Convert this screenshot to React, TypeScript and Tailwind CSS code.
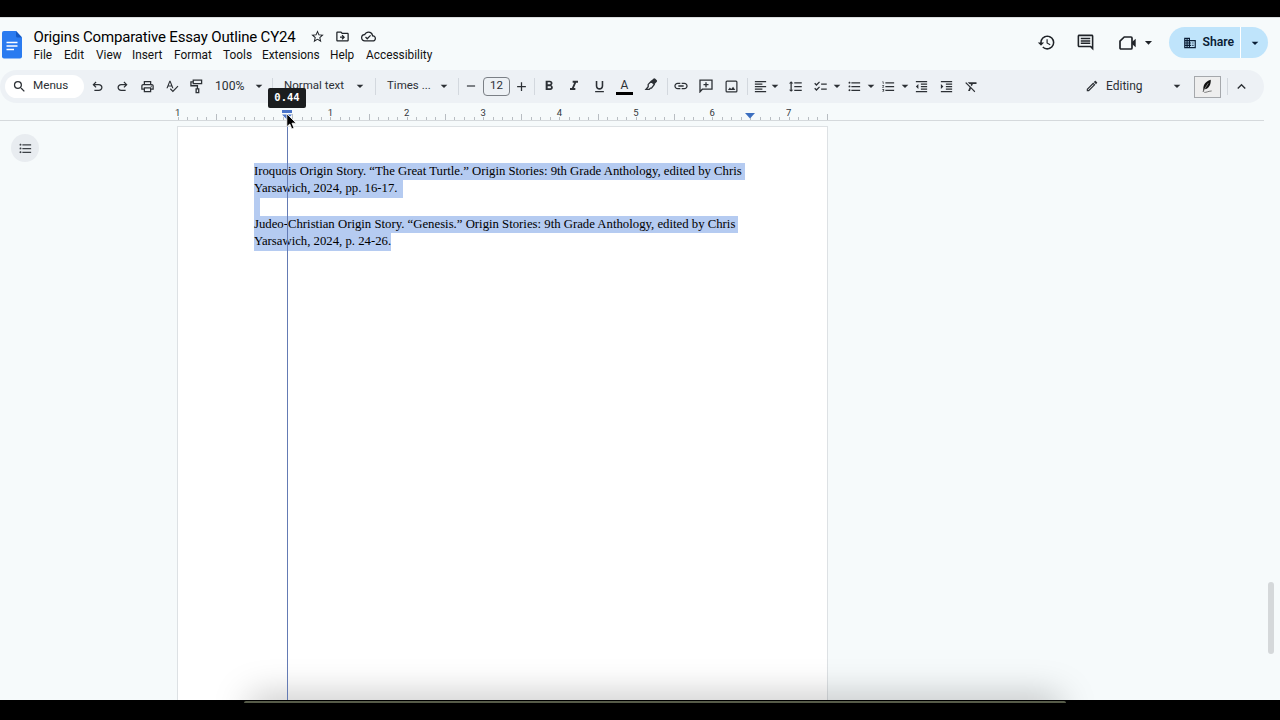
import type { ReactNode } from "react"
import {
  MdAdd,
  MdArrowDropDown,
  MdChecklist,
  MdDomain,
  MdFormatAlignLeft,
  MdFormatBold,
  MdFormatClear,
  MdFormatIndentDecrease,
  MdFormatIndentIncrease,
  MdFormatItalic,
  MdFormatLineSpacing,
  MdFormatListBulleted,
  MdFormatListNumbered,
  MdFormatUnderlined,
  MdHistory,
  MdKeyboardArrowUp,
  MdLink,
  MdOutlineCloudDone,
  MdOutlineComment,
  MdOutlineDriveFileMove,
  MdOutlineEdit,
  MdOutlinePrint,
  MdRemove,
  MdSearch,
  MdSpellcheck,
  MdStarOutline,
} from "react-icons/md"

const Slot = ({ w, children }: { w: string; children?: ReactNode }) => (
  <div className={`flex h-full shrink-0 items-center justify-center ${w}`}>{children}</div>
)

const Divider = () => <div className="-mr-px h-[17px] w-px shrink-0 bg-[#d3d8de]" />

const Caret = ({ w }: { w: string }) => (
  <Slot w={w}>
    <MdArrowDropDown size={16} className="shrink-0" />
  </Slot>
)

const UndoIcon = ({ flip }: { flip?: boolean }) => (
  <svg viewBox="0 -960 960 960" fill="currentColor" className={flip ? "size-[15px] -scale-x-100" : "size-[15px]"}>
    <path d="M280-200v-80h284q63 0 109.500-40T720-420q0-60-46.500-100T564-560H312l104 104-56 56-200-200 200-200 56 56-104 104h252q97 0 166.500 63T800-420q0 94-69.500 157T564-200H280Z" />
  </svg>
)

const DocsLogo = () => (
  <svg viewBox="0 0 20 28" className="h-[28px] w-[20px]">
    <path d="M2 0h12l6 6.500V25.500a2 2 0 0 1-2 2H2a2 2 0 0 1-2-2V2a2 2 0 0 1 2-2z" fill="#2a7bf0" />
    <path d="M14 0l6 6.500h-4.500A1.500 1.500 0 0 1 14 5z" fill="#1459c4" />
    <path d="M4.500 11.500h11M4.500 15h11M4.500 18.500h7.500" stroke="#fff" strokeWidth="1.500" />
  </svg>
)

const PaintIcon = () => (
  <svg viewBox="0 0 14 16" fill="none" stroke="currentColor" strokeWidth="1.400" className="h-[15px] w-[13px]">
    <path d="M3.500 1.200h9v3.600h-9zM3.500 3H1v4.200h7v3.300M6.600 10.500h2.800v4.200H6.600z" />
  </svg>
)

const MarkerIcon = () => (
  <svg viewBox="0 0 14 14" className="mb-[3px] h-[14px] w-[14px]">
    <path d="M7 2.900L9.300.8a1.400 1.400 0 0 1 2 0l1.300 1.300a1.400 1.400 0 0 1 0 2L10.500 6.300z" fill="currentColor" />
    <path d="M7.300 3.200L4.200 6.400v2.400L2 11.300h3.300l1.200-1.200h1l2.800-3.600z" fill="none" stroke="currentColor" strokeWidth="1.300" />
  </svg>
)

const AddCommentIcon = () => (
  <svg viewBox="0 0 14 14" fill="none" stroke="currentColor" strokeWidth="1.300" className="size-[14px]">
    <path d="M1 12.800V1.200h12v9H3.300zM7 3.200v5M4.500 5.700h5" />
  </svg>
)

const ImageIcon = () => (
  <svg viewBox="0 0 14 14" className="size-[13px]">
    <rect x="1.200" y="1.200" width="11.600" height="11.600" rx="1" fill="none" stroke="currentColor" strokeWidth="1.300" />
    <path d="M3.200 10.700l2-2.600 1.500 1.700 2-2.600 2.400 3.500z" fill="currentColor" />
  </svg>
)

const CameraIcon = () => (
  <svg viewBox="0 0 18 14" className="h-[14px] w-[18px]">
    <path d="M5.200 1H12a1 1 0 0 1 1 1v10a1 1 0 0 1-1 1H2a1 1 0 0 1-1-1V5.200z" fill="none" stroke="currentColor" strokeWidth="1.700" strokeLinejoin="round" />
    <path d="M13 6l3.700-3.300v8.600L13 8z" fill="currentColor" />
  </svg>
)

const QuillIcon = () => (
  <svg viewBox="0 0 14 16" className="h-[15px] w-[13px]">
    <path d="M10.500.8C6 2 2.200 5.600 2.500 11l-.7 2.600.7.200L4 11c4.600-.4 6.800-5.200 6.500-10.200z" fill="#111" />
    <path d="M2.200 13.500L7.800 4.500" stroke="#eee" strokeWidth=".5" />
    <path d="M3.500 14.300c2.500.3 3.500-1.200 8-1.500" stroke="#555" strokeWidth=".8" fill="none" />
  </svg>
)

const Cursor = () => (
  <svg viewBox="0 0 12 18" className="absolute top-[113px] left-[286px] h-[18px] w-[12px]">
    <path d="M.8.800v13l3-2.800 2 4.900 2.200-.9-2-4.800h4.200z" fill="#000" stroke="#fff" strokeWidth=".8" />
  </svg>
)

const menus = [
  { name: "File", w: "w-[30.500px]" },
  { name: "Edit", w: "w-[32px]" },
  { name: "View", w: "w-[36px]" },
  { name: "Insert", w: "w-[42px]" },
  { name: "Format", w: "w-[49px]" },
  { name: "Tools", w: "w-[39px]" },
  { name: "Extensions", w: "w-[68px]" },
  { name: "Help", w: "w-[36px]" },
  { name: "Accessibility", w: "w-[80px]" },
]

const Header = () => (
  <header className="flex h-[53px] shrink-0 justify-between text-[#1f2328]">
    <div className="flex">
      <div className="mt-[13px] ml-[2px] w-[31.500px]">
        <DocsLogo />
      </div>
      <div className="pt-[8px]">
        <div className="flex h-[21px] items-center">
          <h1 className="w-[276px] pt-[2px] font-[Roboto] text-[15px] tracking-[-0.170px] whitespace-nowrap text-black">Origins Comparative Essay Outline CY24</h1>
          <div className="flex items-center gap-[10.500px]">
            <MdStarOutline size={15} />
            <MdOutlineDriveFileMove size={15} />
            <MdOutlineCloudDone size={15} />
          </div>
        </div>
        <nav className="flex h-[18px] items-center font-[Roboto] text-[11.850px] text-[#111]">
          {menus.map((m) => (
            <span key={m.name} className={`whitespace-nowrap ${m.w}`}>
              {m.name}
            </span>
          ))}
        </nav>
      </div>
    </div>
    <div className="mt-[9px] mr-[12px] flex h-[31px] items-center">
      <Slot w="w-[38px]">
        <MdHistory size={19} />
      </Slot>
      <Slot w="w-[39px]">
        <MdOutlineComment size={19} />
      </Slot>
      <Slot w="w-[47px]">
        <CameraIcon />
      </Slot>
      <div className="-ml-[12px]">
        <MdArrowDropDown size={17} />
      </div>
      <div className="ml-[12.500px] flex h-full w-[99px] overflow-hidden rounded-full bg-[#bfe4fb] text-[#0a1d35]">
        <div className="flex w-[72px] shrink-0 items-center border-r border-white pl-[14px] font-[Roboto] text-[12.200px] font-semibold">
          <MdDomain size={14} className="shrink-0" />
          <span className="ml-[5.500px]">Share</span>
        </div>
        <div className="flex flex-1 items-center justify-center">
          <MdArrowDropDown size={16} />
        </div>
      </div>
    </div>
  </header>
)

const Toolbar = () => (
  <div className="flex h-[33px] w-[1264px] shrink-0 items-center rounded-full bg-[#edf1f5] pb-px pl-[5px] font-[Roboto] text-[12px] text-[#2c3035]">
    <div className="flex h-[23px] w-[79px] shrink-0 items-center rounded-full bg-white pl-[7px]">
      <MdSearch size={15} />
      <span className="ml-[6px] text-[11.700px]">Menus</span>
    </div>
    <Slot w="w-[26px]"><UndoIcon /></Slot>
    <Slot w="w-[25px]"><UndoIcon flip /></Slot>
    <Slot w="w-[24px]"><MdOutlinePrint size={15} /></Slot>
    <Slot w="w-[25px]"><MdSpellcheck size={14} /></Slot>
    <Slot w="w-[24px]"><PaintIcon /></Slot>
    <span className="w-[42px] pl-[7px] text-[12.200px]">100%</span>
    <Caret w="w-[17px]" />
    <div className="w-[5px]" />
    <Divider />
    <span className="w-[79.500px] pl-[12px] text-[11.500px] whitespace-nowrap">Normal text</span>
    <Caret w="w-[17px]" />
    <div className="w-[6.500px]" />
    <Divider />
    <span className="w-[60px] pl-[12px] text-[11.500px] whitespace-nowrap">Times ...</span>
    <Caret w="w-[17px]" />
    <div className="w-[6px]" />
    <Divider />
    <Slot w="w-[25px]"><MdRemove size={14} /></Slot>
    <div className="flex h-[19px] w-[27px] shrink-0 items-center justify-center rounded-[4px] border border-[#7b8086] text-[11.500px]">12</div>
    <Slot w="w-[23px]"><MdAdd size={15} /></Slot>
    <div className="w-[1px]" />
    <Divider />
    <div className="w-[2.500px]" />
    <Slot w="w-[25px]"><MdFormatBold size={16} /></Slot>
    <Slot w="w-[25px]"><MdFormatItalic size={16} /></Slot>
    <Slot w="w-[25px]"><MdFormatUnderlined size={15} /></Slot>
    <Slot w="w-[26px]">
      <div className="flex h-[17px] w-[17px] items-start justify-center border-b-[3px] border-black text-[12px] leading-[14px]">A</div>
    </Slot>
    <Slot w="w-[26px]"><MarkerIcon /></Slot>
    <div className="w-[3px]" />
    <Divider />
    <div className="w-[2px]" />
    <Slot w="w-[25px]"><MdLink size={16} /></Slot>
    <Slot w="w-[25px]"><AddCommentIcon /></Slot>
    <Slot w="w-[25px]"><ImageIcon /></Slot>
    <div className="w-[3.500px]" />
    <Divider />
    <Slot w="w-[26px]"><MdFormatAlignLeft size={15} /></Slot>
    <Caret w="w-[4px]" />
    <div className="w-[5px]" />
    <Slot w="w-[26px]"><MdFormatLineSpacing size={15} /></Slot>
    <Slot w="w-[25px]"><MdChecklist size={15} /></Slot>
    <Caret w="w-[7px]" />
    <Slot w="w-[28px]"><MdFormatListBulleted size={15} /></Slot>
    <Caret w="w-[5px]" />
    <Slot w="w-[30px]"><MdFormatListNumbered size={15} /></Slot>
    <Caret w="w-[4px]" />
    <div className="w-[2px]" />
    <Slot w="w-[25px]"><MdFormatIndentDecrease size={15} /></Slot>
    <Slot w="w-[25px]"><MdFormatIndentIncrease size={15} /></Slot>
    <Slot w="w-[25px]"><MdFormatClear size={15} /></Slot>
    <div className="ml-auto flex h-full items-center">
      <MdOutlineEdit size={14} />
      <span className="ml-[7px] w-[62px]">Editing</span>
      <Caret w="w-[17px]" />
      <div className="mt-px mr-[7px] ml-[9px] flex h-[22px] w-[27px] items-center justify-center border border-[#a5a8ac] bg-[#eeeeee]">
        <QuillIcon />
      </div>
      <div className="-ml-[1px]"><Divider /></div>
      <div className="mr-[14px] ml-[6px]">
        <MdKeyboardArrowUp size={17} />
      </div>
    </div>
  </div>
)

// one tick every eighth of an inch, starting an inch before the margin
const ticks = Array.from({ length: 69 }, (_, i) => i)

const Ruler = () => (
  <div className="flex h-[18px] w-[1264px] shrink-0 items-end border-b border-[#d5d9dc] pl-[177.600px]">
    {ticks.map((i) => {
      const inch = i % 8 === 0 && i !== 8
      return (
        <div key={i} className={`relative w-[9.550px] shrink-0 border-l border-[#b8bdc2] ${i % 8 === 4 || i === 68 ? "h-[6px]" : "h-[3px]"}`}>
          {inch && (
            <span className="absolute bottom-[2px] -left-[11px] w-[20px] text-center font-[Roboto] text-[9.500px] leading-[10px] text-[#33373c]">
              {Math.abs(i / 8 - 1)}
            </span>
          )}
        </div>
      )
    })}
  </div>
)

const lines = [
  { text: "Iroquois Origin Story. “The Great Turtle.” Origin Stories: 9th Grade Anthology, edited by Chris", w: "w-[491px]" },
  { text: "Yarsawich, 2024, pp. 16-17.", w: "w-[149px]" },
  { text: "", w: "w-[6px]" },
  { text: "Judeo-Christian Origin Story. “Genesis.” Origin Stories: 9th Grade Anthology, edited by Chris", w: "w-[484px]" },
  { text: "Yarsawich, 2024, p. 24-26.", w: "w-[137px]" },
]

const Page = () => (
  <div className="ml-[177px] h-full w-[651px] border border-b-0 border-[#dde1e4] bg-white pt-[35.900px] pl-[76px]">
    {lines.map((l, i) => (
      <div key={i} className={`h-[17.600px] bg-[#b5cbf1] font-['Liberation_Serif'] text-[12.760px] leading-[17.600px] whitespace-nowrap text-black ${l.w}`}>
        {l.text}
      </div>
    ))}
  </div>
)

export default function App() {
  return (
    <div className="relative flex h-[720px] w-[1280px] flex-col overflow-hidden bg-black pt-[17px] font-[Inter]">
      <div className="relative flex h-[683px] flex-col overflow-hidden border-t border-[#d9dcde] bg-[#f6fafb]">
        <Header />
        <div className="-mt-px"><Toolbar /></div>
        <Ruler />
        <main className="flex min-h-0 flex-1 pt-[5px]">
          <Page />
        </main>
        <button className="absolute top-[116px] left-[11px] flex size-[28px] items-center justify-center rounded-full bg-[#e8ecf0] text-[#3c4146]">
          <MdFormatListBulleted size={15} />
        </button>
        <div className="absolute top-[564px] right-[6px] h-[72px] w-[6px] rounded-full bg-[#d5d8da]" />
        <div className="absolute top-[684px] left-[255px] h-[20px] w-[800px] shadow-[0_0_36px_5px_rgba(0,0,0,0.260)]" />
      </div>
      <div className="mx-auto mt-[1px] mr-[214px] h-[2px] w-[822px] rounded-t-full bg-[#565b48]" />
      <div className="absolute top-[121px] left-[287px] h-[579px] w-px bg-[#647bb4]" />
      <svg viewBox="0 0 10 10" className="absolute top-[110px] left-[282px] size-[10px]">
        <path d="M0 0h10v3H0zM0 4.500h10L5 9.500z" fill="#4a74c9" />
      </svg>
      <svg viewBox="0 0 10 6" className="absolute top-[113px] left-[745px] h-[6px] w-[10px]">
        <path d="M0 0h10L5 5.500z" fill="#3c6fc0" />
      </svg>
      <div className="absolute top-[88px] left-[268px] flex h-[20px] w-[38px] items-center justify-center rounded-[2px] bg-[#1b1d1f] font-['DejaVu_Sans_Mono'] text-[10.500px] font-bold text-white">
        0.44
      </div>
      <Cursor />
    </div>
  )
}
